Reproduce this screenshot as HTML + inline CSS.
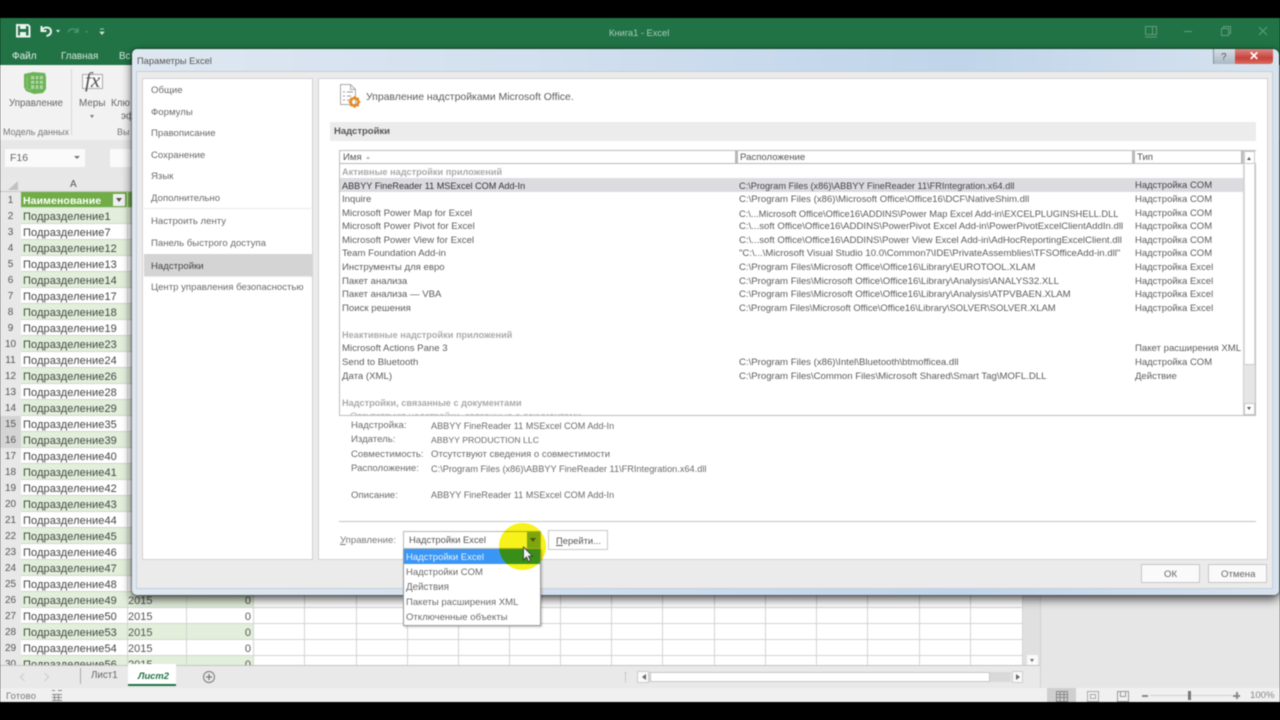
<!DOCTYPE html>
<html lang="ru"><head><meta charset="utf-8"><title>Книга1 - Excel</title>
<style>
html,body{margin:0;padding:0;background:#000}
#p{position:relative;width:1280px;height:720px;overflow:hidden;background:#000;font-family:"Liberation Sans",sans-serif;font-size:9.6px;color:#555;filter:blur(.45px)}
#p div{position:absolute}
.t{white-space:nowrap;line-height:14px;height:14px;margin-top:1px}
.r{left:0;width:1023px;height:16px;border-bottom:1px solid #d4d4d4;box-sizing:border-box;background:#fff}
.g{background:#e2efda}
.n{left:0;width:21px;text-align:center;background:#e8e8e8;color:#555;font-size:10px;line-height:18px;height:16px}
.a{left:23px;line-height:18px;height:16px;font-size:11px;color:#444;white-space:nowrap;letter-spacing:.1px}
.v{position:absolute;top:0;width:1px;background:#d4d4d4}
.y{left:128px;line-height:18px;height:16px;font-size:11px;color:#555}
.z{left:186px;width:65px;text-align:right;line-height:18px;height:16px;font-size:11px;color:#555}
.nv{left:151px;color:#6a6a6a;font-size:9.6px}
.l1{left:342px;color:#5c5c5c}.l2{left:739px;color:#5c5c5c}.l3{left:1135px;color:#5c5c5c;font-size:9.5px}
.gh{left:342px;color:#aaa;font-weight:bold;font-size:9.2px;margin-top:0}
.lb{left:351px;color:#6a6a6a}.lv{left:431px;color:#6a6a6a}
.m{left:406px;color:#6a6a6a;font-size:9.8px}
</style></head><body><div id="p">

<!-- Title/tab band -->
<div style="left:0;top:18px;width:1280px;height:47px;background:#217346"></div>
<div class="t" style="left:609px;top:25px;color:#a9cdb8;font-size:9.3px">Книга1 - Excel</div>
<svg style="position:absolute;left:14px;top:23px" width="96" height="15" viewBox="0 0 96 15"><path d="M3 2h11l1.500 1.500v10H3z" fill="none" stroke="#eaf3ee" stroke-width="2"/><rect x="6" y="2.500" width="6" height="3.500" fill="#eaf3ee"/><rect x="6" y="9" width="6" height="4" fill="#eaf3ee"/><path d="M28 7c2-3.500 9-3.500 9 1.500 0 3-2.500 4-4.500 4.500M27.500 3v5h5" fill="none" stroke="#eaf3ee" stroke-width="2"/><path d="M42 7h4l-2 2.500z" fill="#eaf3ee"/><path d="M54 9c2-4 8-4 10 0M64 5v4h-4" fill="none" stroke="#4d9570" stroke-width="1.500"/><path d="M71 8h3l-1.500 2z" fill="#4d9570"/><path d="M86 6h4M86 9h4l-2 2.500z" fill="#d6e6dc" stroke="#d6e6dc" stroke-width=".7"/></svg>
<svg style="position:absolute;left:1140px;top:22px" width="130" height="18" viewBox="0 0 130 18" fill="none" stroke="#5f9d7d" stroke-width="1"><rect x="5.500" y="4.500" width="11" height="8"/><path d="M5 15h12M12.500 4.500v8"/><path d="M44 9.500h8"/><rect x="81.500" y="6.500" width="7" height="7"/><path d="M83.500 6V4.500h7v7H89"/><path d="M119 5l8 8M127 5l-8 8"/></svg>
<div class="t" style="left:12px;top:49px;color:#e6f1ea;font-size:10px">Файл</div>
<div class="t" style="left:61px;top:49px;color:#d6e8dd;font-size:9.8px">Главная</div>
<div class="t" style="left:119px;top:49px;color:#d6e8dd;font-size:9.8px">Вс</div>

<!-- Ribbon -->
<div style="left:0;top:65px;width:1280px;height:75px;background:#f2f2f2;border-bottom:1px solid #d2d2d2"></div>
<div style="left:71px;top:69px;width:1px;height:66px;background:#d8d8d8"></div>
<svg style="position:absolute;left:22px;top:70px" width="26" height="26" viewBox="0 0 26 26"><path d="M2 4l9-2 12 1 1 4v12l-3 4-9 1-8-3-2-4z" fill="#6cb356"/><path d="M9 6h12v13H9z" fill="#a8d59a"/><path d="M9 10h12M9 14.500h12M13 6v13M17 6v13" stroke="#5ba348" fill="none"/><path d="M5 7v12l4 1" stroke="#8cc878" fill="none"/></svg>
<div class="t" style="left:9px;top:96px;font-size:9.7px;color:#666">Управление</div>
<div class="t" style="left:3px;top:124px;font-size:9px;color:#777">Модель данных</div>
<svg style="position:absolute;left:80px;top:69px" width="24" height="24" viewBox="0 0 24 24"><rect x="2.500" y="5.500" width="20" height="14" fill="#fafafa" stroke="#aaa"/><text x="5" y="18" font-family="Liberation Serif,serif" font-style="italic" font-size="21" fill="#555">fx</text></svg>
<div class="t" style="left:79px;top:96px;font-size:9.9px;color:#666">Меры</div>
<div class="t" style="left:111px;top:96px;font-size:9.9px;color:#666">Клю</div>
<div class="t" style="left:121px;top:109px;font-size:9.9px;color:#666">эф</div>
<div style="left:90px;top:115px;width:0;height:0;border:2.500px solid transparent;border-top:3px solid #777"></div>
<div class="t" style="left:117px;top:124px;font-size:9px;color:#777">Вы</div>

<!-- Formula bar -->
<div style="left:0;top:140px;width:1280px;height:38px;background:#e7e7e7"></div>
<div style="left:5px;top:149px;width:80px;height:18px;background:#fafafa"></div>
<div class="t" style="left:10px;top:150px;color:#666;font-size:10.5px">F16</div>
<div style="left:74px;top:156px;width:0;height:0;border:3px solid transparent;border-top:3.500px solid #777"></div>
<div style="left:110px;top:149px;width:25px;height:18px;background:#fafafa"></div>

<!-- Column header -->
<div style="left:0;top:178px;width:1040px;height:14px;background:#e8e8e8;border-bottom:1px solid #c8c8c8;box-sizing:border-box"></div>
<div class="t" style="left:70px;top:177px;color:#555;font-size:10px">A</div>
<svg style="position:absolute;left:7px;top:180px" width="12" height="11"><path d="M11 1v9H1z" fill="#c2c2c2"/></svg>

<!-- Sheet rows -->
<div class="r" style="top:192px;background:#70ad47"></div>
<div class="r g" style="top:208px"></div><div class="r" style="top:224px"></div>
<div class="r g" style="top:240px"></div><div class="r" style="top:256px"></div>
<div class="r g" style="top:272px"></div><div class="r" style="top:288px"></div>
<div class="r g" style="top:304px"></div><div class="r" style="top:320px"></div>
<div class="r g" style="top:336px"></div><div class="r" style="top:352px"></div>
<div class="r g" style="top:368px"></div><div class="r" style="top:384px"></div>
<div class="r g" style="top:400px"></div><div class="r" style="top:416px"></div>
<div class="r g" style="top:432px"></div><div class="r" style="top:448px"></div>
<div class="r g" style="top:464px"></div><div class="r" style="top:480px"></div>
<div class="r g" style="top:496px"></div><div class="r" style="top:512px"></div>
<div class="r g" style="top:528px"></div><div class="r" style="top:544px"></div>
<div class="r g" style="top:560px"></div><div class="r" style="top:576px"></div>
<div class="r" style="top:592px;background:linear-gradient(90deg,#e2efda 253px,#fff 253px)"></div>
<div class="r" style="top:608px"></div>
<div class="r" style="top:624px;background:linear-gradient(90deg,#e2efda 253px,#fff 253px)"></div>
<div class="r" style="top:640px"></div>
<div class="r" style="top:656px;height:9px;border:0;background:linear-gradient(90deg,#e2efda 253px,#fff 253px)"></div>
<div class="v" style="left:253px;top:192px;height:473px"></div><div class="v" style="left:304px;top:192px;height:473px"></div>
<div class="v" style="left:356px;top:192px;height:473px"></div><div class="v" style="left:407px;top:192px;height:473px"></div>
<div class="v" style="left:458px;top:192px;height:473px"></div><div class="v" style="left:509px;top:192px;height:473px"></div>
<div class="v" style="left:560px;top:192px;height:473px"></div><div class="v" style="left:611px;top:192px;height:473px"></div>
<div class="v" style="left:662px;top:192px;height:473px"></div><div class="v" style="left:714px;top:192px;height:473px"></div>
<div class="v" style="left:765px;top:192px;height:473px"></div><div class="v" style="left:816px;top:192px;height:473px"></div>
<div class="v" style="left:867px;top:192px;height:473px"></div><div class="v" style="left:919px;top:192px;height:473px"></div>
<div class="v" style="left:970px;top:192px;height:473px"></div><div class="v" style="left:1022px;top:192px;height:473px"></div>
<div class="v" style="left:127px;top:192px;height:473px"></div>
<div class="v" style="left:186px;top:192px;height:473px"></div>

<div class="n" style="top:192px">1</div><div class="n" style="top:208px">2</div><div class="n" style="top:224px">3</div><div class="n" style="top:240px">4</div><div class="n" style="top:256px">5</div><div class="n" style="top:272px">6</div><div class="n" style="top:288px">7</div><div class="n" style="top:304px">8</div><div class="n" style="top:320px">9</div><div class="n" style="top:336px">10</div><div class="n" style="top:352px">11</div><div class="n" style="top:368px">12</div><div class="n" style="top:384px">13</div><div class="n" style="top:400px">14</div><div class="n" style="top:416px;background:#d4d4d4">15</div><div class="n" style="top:432px;background:#d4d4d4">16</div><div class="n" style="top:448px">17</div><div class="n" style="top:464px">18</div><div class="n" style="top:480px">19</div><div class="n" style="top:496px">20</div><div class="n" style="top:512px">21</div><div class="n" style="top:528px">22</div><div class="n" style="top:544px">23</div><div class="n" style="top:560px">24</div><div class="n" style="top:576px">25</div><div class="n" style="top:592px">26</div><div class="n" style="top:608px">27</div><div class="n" style="top:624px">28</div><div class="n" style="top:640px">29</div><div class="n" style="top:656px;height:9px;overflow:hidden">30</div>

<div class="a" style="top:192px;color:#fff;font-weight:bold;font-size:10.5px">Наименование</div>
<div style="left:113px;top:194px;width:12px;height:12px;background:#f0f0f0"></div>
<div style="left:116px;top:198px;width:0;height:0;border:3px solid transparent;border-top:4px solid #555"></div>
<div class="a" style="top:208px">Подразделение1</div><div class="a" style="top:224px">Подразделение7</div><div class="a" style="top:240px">Подразделение12</div><div class="a" style="top:256px">Подразделение13</div><div class="a" style="top:272px">Подразделение14</div><div class="a" style="top:288px">Подразделение17</div><div class="a" style="top:304px">Подразделение18</div><div class="a" style="top:320px">Подразделение19</div><div class="a" style="top:336px">Подразделение23</div><div class="a" style="top:352px">Подразделение24</div><div class="a" style="top:368px">Подразделение26</div><div class="a" style="top:384px">Подразделение28</div><div class="a" style="top:400px">Подразделение29</div><div class="a" style="top:416px">Подразделение35</div><div class="a" style="top:432px">Подразделение39</div><div class="a" style="top:448px">Подразделение40</div><div class="a" style="top:464px">Подразделение41</div><div class="a" style="top:480px">Подразделение42</div><div class="a" style="top:496px">Подразделение43</div><div class="a" style="top:512px">Подразделение44</div><div class="a" style="top:528px">Подразделение45</div><div class="a" style="top:544px">Подразделение46</div><div class="a" style="top:560px">Подразделение47</div><div class="a" style="top:576px">Подразделение48</div><div class="a" style="top:592px">Подразделение49</div><div class="a" style="top:608px">Подразделение50</div><div class="a" style="top:624px">Подразделение53</div><div class="a" style="top:640px">Подразделение54</div><div class="a" style="top:656px;height:9px;overflow:hidden">Подразделение56</div>
<div class="y" style="top:592px">2015</div><div class="z" style="top:592px">0</div>
<div class="y" style="top:608px">2015</div><div class="z" style="top:608px">0</div>
<div class="y" style="top:624px">2015</div><div class="z" style="top:624px">0</div>
<div class="y" style="top:640px">2015</div><div class="z" style="top:640px">0</div>
<div class="y" style="top:656px;height:9px;overflow:hidden">2015</div><div class="z" style="top:656px;height:9px;overflow:hidden">0</div>

<!-- Right grey area and scrollbar -->
<div style="left:1023px;top:178px;width:257px;height:510px;background:#e6e6e6"></div>
<div style="left:1023px;top:178px;width:17px;height:488px;background:#e0e0e0"></div>
<div style="left:1040px;top:178px;width:1px;height:510px;background:#d2d2d2"></div>
<div style="left:1027px;top:655px;width:11px;height:11px;background:#fafafa"></div>
<div style="left:1030px;top:659px;width:0;height:0;border:2.500px solid transparent;border-top:3px solid #666"></div>

<!-- Sheet tab strip -->
<div style="left:0;top:665px;width:1040px;height:23px;background:#e9e9e9;border-top:1px solid #c4c4c4;box-sizing:border-box"></div>
<div style="left:80px;top:668px;width:1px;height:16px;background:#aaa"></div>
<div class="t" style="left:91px;top:668px;color:#666;font-size:9.8px">Лист1</div>
<div style="left:128px;top:664px;width:48px;height:20px;background:#fff;border-bottom:2px solid #217346"></div>
<div class="t" style="left:138px;top:668px;color:#217346;font-size:9.4px;font-weight:bold;font-style:italic">Лист2</div>
<svg style="position:absolute;left:201px;top:669px" width="16" height="16"><circle cx="8" cy="8" r="5.500" fill="none" stroke="#888" stroke-width="1.200"/><path d="M5 8h6M8 5v6" stroke="#777" stroke-width="1.300"/></svg>
<div style="left:21px;top:674px;width:5px;height:5px;border-left:1px solid #ccc;border-bottom:1px solid #ccc;transform:rotate(45deg)"></div>
<div style="left:42px;top:674px;width:5px;height:5px;border-right:1px solid #ccc;border-top:1px solid #ccc;transform:rotate(45deg)"></div>
<!-- h scrollbar -->
<div style="left:637px;top:672px;width:374px;height:10px;background:#d9d9d9"></div>
<div style="left:650px;top:672px;width:340px;height:10px;background:#fff;border:1px solid #c8c8c8;box-sizing:border-box"></div>
<div style="left:637px;top:671px;width:12px;height:12px;background:#fafafa;border:1px solid #ccc;box-sizing:border-box"></div>
<div style="left:639px;top:674px;width:0;height:0;border:3px solid transparent;border-right:4px solid #666"></div>
<div style="left:1012px;top:671px;width:11px;height:12px;background:#fafafa;border:1px solid #ccc;box-sizing:border-box"></div>
<div style="left:1016px;top:674px;width:0;height:0;border:3px solid transparent;border-left:4px solid #666"></div>
<div style="left:625px;top:672px;width:1px;height:10px;border-left:1px dotted #aaa"></div>

<!-- Status bar -->
<div style="left:0;top:688px;width:1280px;height:14px;background:#f0f0f0"></div>
<div class="t" style="left:6px;top:688px;color:#777;font-size:9.4px;letter-spacing:.2px">Готово</div>
<svg style="position:absolute;left:51px;top:689px" width="12" height="12" fill="none" stroke="#888"><path d="M1 1.500h3M7 1.500h4M1 5.500h10M1 8.500h10M1 11.500h10M3.500 5v7M7.500 5v7"/></svg>
<div style="left:1047px;top:688px;width:29px;height:14px;background:#cfcfcf"></div>
<svg style="position:absolute;left:1050px;top:689px" width="100" height="13" fill="none" stroke="#888"><path d="M6.500 2.500h11v10h-11zM6.500 5.500h11M6.500 8.500h11M10 2.500v10M14 2.500v10"/><path d="M37.500 2.500h11v10h-11zM40.500 5.500h5v4h-5z" stroke="#aaa"/><path d="M67.500 2.500h11v10h-11zM70.500 2.500v5h5v-5" stroke="#999"/></svg>
<div style="left:1142px;top:695px;width:6px;height:1.500px;background:#888"></div>
<div style="left:1150px;top:695px;width:82px;height:1px;background:#cfcfcf"></div>
<div style="left:1188px;top:691px;width:3px;height:9px;background:#777"></div>
<div style="left:1233px;top:695px;width:7px;height:1.500px;background:#888"></div>
<div style="left:1236px;top:692px;width:1.500px;height:7px;background:#888"></div>
<div class="t" style="left:1250px;top:688px;color:#888;font-size:9.6px">100%</div>

<!-- Dialog -->
<div style="left:132px;top:49px;width:1147px;height:546px;border-radius:5px 6px 5px 5px;background:linear-gradient(90deg,#dfe8f1,#d2e0ef 35%,#c0d5ea 72%,#d7e3ef);box-shadow:0 4px 10px rgba(0,0,0,.7),0 0 2px rgba(0,0,0,.7)"></div>
<div class="t" style="left:137px;top:53px;color:#555;font-size:9.3px">Параметры Excel</div>
<div style="left:1213px;top:49px;width:22px;height:15px;background:linear-gradient(#d7dfe6,#aab8c4);border-left:1px solid #8494a2;box-sizing:border-box"></div>
<div class="t" style="left:1221px;top:50px;color:#555;font-size:10px">?</div>
<div style="left:1235px;top:49px;width:38px;height:15px;background:linear-gradient(#d98b85,#c8423a 60%,#d86a60);border-radius:0 0 3px 0"></div>
<div class="t" style="left:1249px;top:49px;color:#fff;font-size:12px;font-weight:bold;margin-top:0">✕</div>
<div style="left:136px;top:71px;width:1137px;height:518px;background:#ebebeb;border:1px solid #c5ced8;box-sizing:border-box"></div>

<!-- Left nav -->
<div style="left:142px;top:78px;width:171px;height:482px;background:#fff;border:1px solid #d2d2d2;box-sizing:border-box"></div>
<div style="left:144px;top:208px;width:167px;height:1px;background:#eaeaea"></div>
<div style="left:144px;top:254px;width:168px;height:23px;background:#d4d4d4"></div>
<div style="left:144px;top:276px;width:167px;height:1px;background:#eaeaea"></div>
<div class="t nv" style="top:83px">Общие</div>
<div class="t nv" style="top:105px">Формулы</div>
<div class="t nv" style="top:126px">Правописание</div>
<div class="t nv" style="top:148px">Сохранение</div>
<div class="t nv" style="top:169px">Язык</div>
<div class="t nv" style="top:191px">Дополнительно</div>
<div class="t nv" style="top:214px">Настроить ленту</div>
<div class="t nv" style="top:236px">Панель быстрого доступа</div>
<div class="t nv" style="top:259px;color:#444">Надстройки</div>
<div class="t nv" style="top:280px">Центр управления безопасностью</div>

<!-- Right panel -->
<div style="left:318px;top:78px;width:950px;height:482px;background:#fff;border:1px solid #d2d2d2;box-sizing:border-box"></div>
<svg style="position:absolute;left:338px;top:83px" width="24" height="26" viewBox="0 0 24 26"><path d="M2.500 1.500h10l5 5v15h-15z" fill="#fff" stroke="#aaa"/><path d="M12.500 1.500v5h5" fill="none" stroke="#aaa"/><path d="M5 9h2M9 9h6M5 13h2M9 13h4M5 17h2M9 17h3" stroke="#999"/><circle cx="16.500" cy="19" r="3.800" fill="none" stroke="#e68a24" stroke-width="2.600"/><path d="M16.500 13v2.500M16.500 22.500V25M10.500 19H13M20 19h2.500M12.300 14.800l1.700 1.700M19 21.500l1.700 1.700M12.300 23.200L14 21.500M19 16.500l1.700-1.700" stroke="#e68a24" stroke-width="1.600"/></svg>
<div class="t" style="left:366px;top:90px;color:#5c5c5c;font-size:10.45px">Управление надстройками Microsoft Office.</div>
<div style="left:330px;top:122px;width:926px;height:19px;background:#ececec"></div>
<div class="t" style="left:334px;top:124px;color:#555;font-size:9.5px;font-weight:bold">Надстройки</div>

<!-- List box -->
<div style="left:339px;top:150px;width:917px;height:266px;border:1px solid #bcbcbc;box-sizing:border-box;background:#fff"></div>
<div style="left:340px;top:151px;width:916px;height:13px;background:#fff;border-bottom:1px solid #b8b8b8;box-sizing:border-box"></div>
<div style="left:735px;top:151px;width:3px;height:13px;background:#b8b8b8"></div>
<div style="left:1132px;top:151px;width:3px;height:13px;background:#b8b8b8"></div>
<div style="left:1241px;top:151px;width:2px;height:13px;background:#b8b8b8"></div>
<div class="t" style="left:343px;top:150px;color:#555">Имя</div>
<div style="left:366px;top:156px;width:0;height:0;border:2.500px solid transparent;border-bottom:3px solid #bbb;margin-top:-2px"></div>
<div class="t" style="left:740px;top:150px;color:#555">Расположение</div>
<div class="t" style="left:1137px;top:150px;color:#555">Тип</div>
<div style="left:1243px;top:151px;width:1px;height:264px;background:#cfcfcf"></div>
<div style="left:1244px;top:151px;width:11px;height:13px;border:1px solid #c8c8c8;box-sizing:border-box;background:#fff"></div>
<div style="left:1247px;top:155px;width:0;height:0;border:2.500px solid transparent;border-bottom:3px solid #555"></div>
<div style="left:1244px;top:165px;width:11px;height:200px;background:#fff;border-left:1px solid #ddd;border-right:1px solid #ddd;border-bottom:1px solid #ccc;box-sizing:border-box"></div>
<div style="left:1244px;top:365px;width:11px;height:38px;background:#e6e6e6"></div>
<div style="left:1244px;top:403px;width:11px;height:12px;border:1px solid #c8c8c8;box-sizing:border-box;background:#fff"></div>
<div style="left:1247px;top:407px;width:0;height:0;border:2.500px solid transparent;border-top:3px solid #555"></div>

<div style="left:340px;top:178px;width:903px;height:14px;background:#dcdce0"></div>
<div class="t gh" style="top:165px">Активные надстройки приложений</div>
<div class="t l1" style="top:178px;color:#333;font-size:9.1px">ABBYY FineReader 11 MSExcel COM Add-In</div><div class="t l2" style="top:178px;color:#444;font-size:9.2px">C:\Program Files (x86)\ABBYY FineReader 11\FRIntegration.x64.dll</div><div class="t l3" style="top:178px;color:#444">Надстройка COM</div>
<div class="t l1" style="top:192px">Inquire</div><div class="t l2" style="top:192px">C:\Program Files (x86)\Microsoft Office\Office16\DCF\NativeShim.dll</div><div class="t l3" style="top:192px">Надстройка COM</div>
<div class="t l1" style="top:205.500px">Microsoft Power Map for Excel</div><div class="t l2" style="top:205.500px;font-size:9.3px">C:\...Microsoft Office\Office16\ADDINS\Power Map Excel Add-in\EXCELPLUGINSHELL.DLL</div><div class="t l3" style="top:205.500px">Надстройка COM</div>
<div class="t l1" style="top:219px">Microsoft Power Pivot for Excel</div><div class="t l2" style="top:219px">C:\...soft Office\Office16\ADDINS\PowerPivot Excel Add-in\PowerPivotExcelClientAddIn.dll</div><div class="t l3" style="top:219px">Надстройка COM</div>
<div class="t l1" style="top:233px">Microsoft Power View for Excel</div><div class="t l2" style="top:233px">C:\...soft Office\Office16\ADDINS\Power View Excel Add-in\AdHocReportingExcelClient.dll</div><div class="t l3" style="top:233px">Надстройка COM</div>
<div class="t l1" style="top:246px">Team Foundation Add-in</div><div class="t l2" style="top:246px">"C:\...\Microsoft Visual Studio 10.0\Common7\IDE\PrivateAssemblies\TFSOfficeAdd-in.dll"</div><div class="t l3" style="top:246px">Надстройка COM</div>
<div class="t l1" style="top:260px">Инструменты для евро</div><div class="t l2" style="top:260px">C:\Program Files\Microsoft Office\Office16\Library\EUROTOOL.XLAM</div><div class="t l3" style="top:260px">Надстройка Excel</div>
<div class="t l1" style="top:274px">Пакет анализа</div><div class="t l2" style="top:274px">C:\Program Files\Microsoft Office\Office16\Library\Analysis\ANALYS32.XLL</div><div class="t l3" style="top:274px">Надстройка Excel</div>
<div class="t l1" style="top:287px">Пакет анализа — VBA</div><div class="t l2" style="top:287px">C:\Program Files\Microsoft Office\Office16\Library\Analysis\ATPVBAEN.XLAM</div><div class="t l3" style="top:287px">Надстройка Excel</div>
<div class="t l1" style="top:301px">Поиск решения</div><div class="t l2" style="top:301px;font-size:9.45px">C:\Program Files\Microsoft Office\Office16\Library\SOLVER\SOLVER.XLAM</div><div class="t l3" style="top:301px">Надстройка Excel</div>
<div class="t gh" style="top:328px">Неактивные надстройки приложений</div>
<div class="t l1" style="top:341px">Microsoft Actions Pane 3</div><div class="t l3" style="top:341px;font-size:9.6px">Пакет расширения XML</div>
<div class="t l1" style="top:355px">Send to Bluetooth</div><div class="t l2" style="top:355px">C:\Program Files (x86)\Intel\Bluetooth\btmofficea.dll</div><div class="t l3" style="top:355px">Надстройка COM</div>
<div class="t l1" style="top:369px">Дата (XML)</div><div class="t l2" style="top:369px">C:\Program Files\Common Files\Microsoft Shared\Smart Tag\MOFL.DLL</div><div class="t l3" style="top:369px">Действие</div>
<div class="t gh" style="top:396px">Надстройки, связанные с документами</div>
<div style="left:350px;top:410px;width:300px;height:5px;overflow:hidden;color:#aaa;white-space:nowrap;line-height:14px">Отсутствуют надстройки, связанные с документами</div>

<!-- Details -->
<div class="t lb" style="top:418px">Надстройка:</div><div class="t lv" style="top:418px;font-size:9.1px">ABBYY FineReader 11 MSExcel COM Add-In</div>
<div class="t lb" style="top:432px">Издатель:</div><div class="t lv" style="top:432px;font-size:8.7px">ABBYY PRODUCTION LLC</div>
<div class="t lb" style="top:447px">Совместимость:</div><div class="t lv" style="top:447px">Отсутствуют сведения о совместимости</div>
<div class="t lb" style="top:461px">Расположение:</div><div class="t lv" style="top:461px;font-size:9.2px">C:\Program Files (x86)\ABBYY FineReader 11\FRIntegration.x64.dll</div>
<div class="t lb" style="top:488px">Описание:</div><div class="t lv" style="top:487px;font-size:9.1px">ABBYY FineReader 11 MSExcel COM Add-In</div>
<div style="left:339px;top:521px;width:917px;height:1px;background:#c4c4c4"></div>

<!-- Manage row -->
<div class="t" style="left:340px;top:533px;color:#777"><u>У</u>правление:</div>
<div style="left:403px;top:531px;width:138px;height:18px;background:#fff;border:1px solid #b8b8b8;box-sizing:border-box"></div>
<div class="t" style="left:409px;top:532px;color:#555;font-size:9.4px">Надстройки Excel</div>
<div style="left:527px;top:532px;width:13px;height:16px;background:#80b070"></div>
<div style="left:530px;top:538px;width:0;height:0;border:3px solid transparent;border-top:4px solid #555"></div>
<div style="left:548px;top:530px;width:60px;height:20px;background:#fff;border:1px solid #c8c8c8;box-sizing:border-box"></div>
<div class="t" style="left:556px;top:533px;color:#555;font-size:9.4px"><u>П</u>ерейти...</div>

<!-- Footer buttons -->
<div style="left:1141px;top:564px;width:59px;height:19px;background:#fafafa;border:1px solid #c6c6c6;box-sizing:border-box"></div>
<div class="t" style="left:1164px;top:567px;color:#666">ОК</div>
<div style="left:1208px;top:564px;width:59px;height:19px;background:#fafafa;border:1px solid #c6c6c6;box-sizing:border-box"></div>
<div class="t" style="left:1221px;top:567px;color:#666">Отмена</div>

<!-- Dropdown -->
<div style="left:403px;top:549px;width:138px;height:77px;background:#fff;border:1px solid #9a9a9a;box-sizing:border-box;box-shadow:1px 1px 2px rgba(0,0,0,.25)"></div>
<div style="left:404px;top:549px;width:136px;height:15px;background:#3a96f5"></div>
<div class="t m" style="top:550px;color:#e8f2ff;font-size:9.5px">Надстройки Excel</div>
<div class="t m" style="top:565px;font-size:9.5px">Надстройки COM</div>
<div class="t m" style="top:580px">Действия</div>
<div class="t m" style="top:595px;font-size:9.55px">Пакеты расширения XML</div>
<div class="t m" style="top:610px;font-size:9.55px">Отключенные объекты</div>

<!-- Cursor highlight -->
<div style="left:499px;top:523px;width:47px;height:47px;border-radius:50%;background:#f6f21a;mix-blend-mode:multiply"></div>
<svg style="position:absolute;left:522px;top:546px" width="14" height="18" viewBox="0 0 14 18"><path d="M1.500 1v13l3-3 2 4.500 2-1-2-4.300h4z" fill="#f4f4f4" stroke="#333" stroke-width=".8"/></svg>

</div></body></html>
